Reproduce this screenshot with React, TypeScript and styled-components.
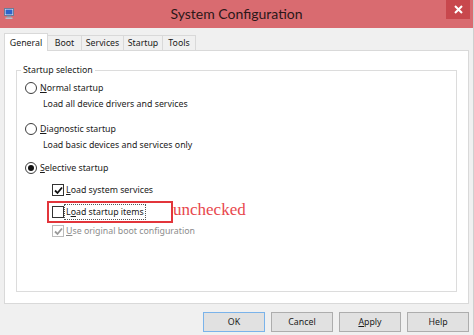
import React from "react";
import styled, { createGlobalStyle } from "styled-components";

const Global = createGlobalStyle`
  html, body { margin: 0; padding: 0; background: #f0f0f0; }
  body { font-family: "Noto Sans", "DejaVu Sans", sans-serif; }
`;

const UI_FONT = `"Noto Sans", "DejaVu Sans", sans-serif`;

const Window = styled.div`
  width: 474px;
  height: 335px;
  background: #f0f0f0;
  display: flex;
  flex-direction: column;
  overflow: hidden;
  box-sizing: border-box;
  border-right: 1px solid #cfcfcf;
`;

const TitleBar = styled.div`
  height: 28px;
  flex: none;
  background: #d96b70;
  display: flex;
  align-items: center;
  position: relative;
`;

const AppIcon = styled.svg`
  position: absolute;
  left: 4px;
  top: 8px;
`;

const Title = styled.div`
  flex: 1;
  text-align: center;
  font-family: "Lato", "Noto Sans", sans-serif;
  font-size: 14px;
  line-height: 18px;
  color: #2b1718;
  margin-top: -1px;
`;

const CloseBtn = styled.div`
  position: absolute;
  right: 3px;
  top: 0;
  width: 24px;
  height: 19px;
  background: #c8474d;
  display: flex;
  align-items: center;
  justify-content: center;
`;

const Body = styled.div`
  flex: 1;
  display: flex;
  flex-direction: column;
  padding: 5px 4px 0 4px;
`;

const TabRow = styled.div`
  display: flex;
  align-items: flex-end;
  height: 18px;
  position: relative;
  z-index: 1;
  margin-bottom: -1px;
`;

const Tab = styled.div<{ $active?: boolean; $w: number }>`
  width: ${(p) => p.$w}px;
  box-sizing: border-box;
  height: ${(p) => (p.$active ? 18 : 16)}px;
  border: 1px solid #d9d9d9;
  border-bottom: ${(p) => (p.$active ? "none" : "1px solid #d9d9d9")};
  margin-left: -1px;
  background: ${(p) => (p.$active ? "#ffffff" : "#f0f0f0")};
  font-family: ${UI_FONT};
  font-size: 8.8px;
  color: #1a1a1a;
  display: flex;
  align-items: center;
  justify-content: center;
  &:first-child { margin-left: 0; }
`;

const Panel = styled.div`
  height: 254px;
  box-sizing: border-box;
  width: 465px;
  background: #ffffff;
  border: 1px solid #d9d9d9;
  padding: 19px 11px 11px 11px;
  display: flex;
`;

const GroupBox = styled.div`
  flex: 1;
  border: 1px solid #dcdcdc;
  position: relative;
  padding: 9px 8px 0 8px;
  display: flex;
  flex-direction: column;
`;

const Legend = styled.div`
  position: absolute;
  left: 4px;
  top: -8px;
  background: #fff;
  padding: 0 2px;
  font-size: 8.8px;
  color: #1a1a1a;
  line-height: 15px;
`;

const OptionRow = styled.div<{ $mt?: number; $indent?: number; $h?: number }>`
  display: flex;
  align-items: center;
  height: ${(p) => p.$h ?? 16}px;
  margin-top: ${(p) => p.$mt ?? 0}px;
  padding-left: ${(p) => p.$indent ?? 0}px;
  position: relative;
`;

const Radio = styled.div<{ $checked?: boolean }>`
  width: 12px;
  height: 12px;
  box-sizing: border-box;
  border-radius: 50%;
  border: 1px solid #3c3c3c;
  background: #fff;
  display: flex;
  align-items: center;
  justify-content: center;
  margin-right: 2px;
  &::after {
    content: "";
    display: ${(p) => (p.$checked ? "block" : "none")};
    width: 6px;
    height: 6px;
    border-radius: 50%;
    background: #111;
  }
`;

const Check = styled.div<{ $disabled?: boolean }>`
  width: 12px;
  height: 12px;
  box-sizing: border-box;
  border: 1px solid ${(p) => (p.$disabled ? "#bcbcbc" : "#333")};
  background: #fff;
  display: flex;
  align-items: center;
  justify-content: center;
  margin-right: 1px;
`;

const Label = styled.span<{ $disabled?: boolean; $focus?: boolean }>`
  font-size: 8.8px;
  color: ${(p) => (p.$disabled ? "#8c8c8c" : "#1a1a1a")};
  white-space: nowrap;
  line-height: 12px;
  padding: 1px 1px;
  outline: ${(p) => (p.$focus ? "1px dotted #555" : "none")};
  & u { text-decoration: underline; text-underline-offset: 1px; }
`;

const Desc = styled.div<{ $mt?: number }>`
  font-size: 8.8px;
  color: #1a1a1a;
  height: 16px;
  line-height: 16px;
  padding-left: 18px;
  margin-top: ${(p) => p.$mt ?? 0}px;
  white-space: nowrap;
`;

const Highlight = styled.div`
  position: absolute;
  left: 22px;
  top: -1px;
  width: 126px;
  height: 22px;
  box-sizing: border-box;
  border: 2px solid #e2353b;
`;

const Annotation = styled.span`
  position: absolute;
  left: 148px;
  top: -3px;
  font-family: "Liberation Serif", "DejaVu Serif", serif;
  font-size: 17px;
  line-height: 22px;
  color: #e8474d;
  white-space: nowrap;
`;

const ButtonRow = styled.div`
  display: flex;
  justify-content: flex-end;
  gap: 6px;
  padding-top: 8px;
`;

const Button = styled.div<{ $default?: boolean }>`
  width: 62px;
  height: 20px;
  box-sizing: border-box;
  background: #e1e1e1;
  border: 1px solid ${(p) => (p.$default ? "#7ab3ea" : "#adadad")};
  font-size: 8.8px;
  color: #1a1a1a;
  display: flex;
  align-items: center;
  justify-content: center;
  & u { text-decoration: underline; }
`;

const CheckMark = ({ color }: { color: string }) => (
  <svg width="9" height="9" viewBox="0 0 9 9">
    <path d="M1 4.5 L3.5 7 L8 1.5" fill="none" stroke={color} strokeWidth="1.8" />
  </svg>
);

export default function App() {
  return (
    <>
      <Global />
      <Window>
        <TitleBar>
          <AppIcon width="10" height="11" viewBox="0 0 10 11">
            <rect x="0.5" y="0.5" width="9" height="7" fill="#e8eef6" stroke="#6b7c99" />
            <rect x="1.5" y="1.5" width="7" height="5" fill="#2d63c8" />
            <rect x="3" y="8" width="4" height="1.5" fill="#8a94a6" />
            <rect x="1.5" y="9.5" width="7" height="1.5" fill="#b8c0cc" />
          </AppIcon>
          <Title>System Configuration</Title>
          <CloseBtn>
            <svg width="9" height="9" viewBox="0 0 9 9">
              <path d="M1 1 L8 8 M8 1 L1 8" stroke="#fff" strokeWidth="2" />
            </svg>
          </CloseBtn>
        </TitleBar>
        <Body>
          <TabRow>
            <Tab $active $w={44}>General</Tab>
            <Tab $w={35}>Boot</Tab>
            <Tab $w={43}>Services</Tab>
            <Tab $w={40}>Startup</Tab>
            <Tab $w={34}>Tools</Tab>
          </TabRow>
          <Panel>
            <GroupBox>
              <Legend>Startup selection</Legend>
              <OptionRow>
                <Radio />
                <Label><u>N</u>ormal startup</Label>
              </OptionRow>
              <Desc>Load all device drivers and services</Desc>
              <OptionRow $mt={9}>
                <Radio />
                <Label><u>D</u>iagnostic startup</Label>
              </OptionRow>
              <Desc>Load basic devices and services only</Desc>
              <OptionRow $mt={7}>
                <Radio $checked />
                <Label><u>S</u>elective startup</Label>
              </OptionRow>
              <OptionRow $mt={4} $indent={27} $h={20}>
                <Check><CheckMark color="#111" /></Check>
                <Label><u>L</u>oad system services</Label>
              </OptionRow>
              <OptionRow $mt={2} $indent={27} $h={20}>
                <Check />
                <Label $focus>L<u>o</u>ad startup items</Label>
                <Highlight />
                <Annotation>unchecked</Annotation>
              </OptionRow>
              <OptionRow $mt={-1} $indent={27} $h={20}>
                <Check $disabled><CheckMark color="#9a9a9a" /></Check>
                <Label $disabled><u>U</u>se original boot configuration</Label>
              </OptionRow>
            </GroupBox>
          </Panel>
          <ButtonRow>
            <Button $default>OK</Button>
            <Button>Cancel</Button>
            <Button><u>A</u>pply</Button>
            <Button>Help</Button>
          </ButtonRow>
        </Body>
      </Window>
    </>
  );
}
